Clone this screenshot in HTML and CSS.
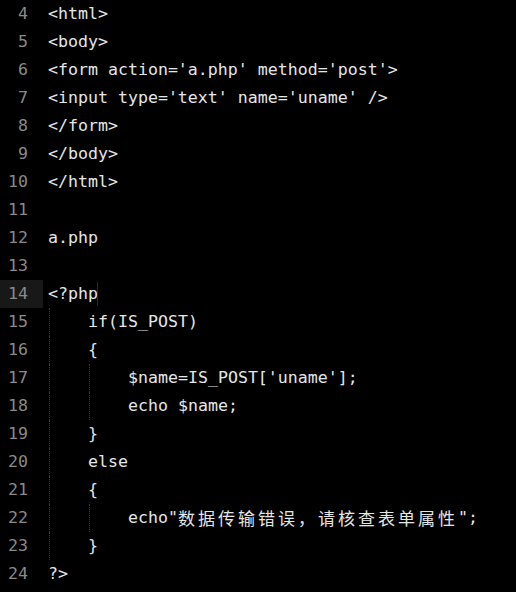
FILE: index.html
```html
<!DOCTYPE html>
<html>
<head>
<meta charset="utf-8">
<link rel="stylesheet" href="styles.css">
</head>
<body>
<div class="editor">
  <div class="line"><span class="num">4</span><span class="code">&lt;html&gt;</span></div>
  <div class="line"><span class="num">5</span><span class="code">&lt;body&gt;</span></div>
  <div class="line"><span class="num">6</span><span class="code">&lt;form action='a.php' method='post'&gt;</span></div>
  <div class="line"><span class="num">7</span><span class="code">&lt;input type='text' name='uname' /&gt;</span></div>
  <div class="line"><span class="num">8</span><span class="code">&lt;/form&gt;</span></div>
  <div class="line"><span class="num">9</span><span class="code">&lt;/body&gt;</span></div>
  <div class="line"><span class="num">10</span><span class="code">&lt;/html&gt;</span></div>
  <div class="line"><span class="num">11</span><span class="code"></span></div>
  <div class="line"><span class="num">12</span><span class="code">a.php</span></div>
  <div class="line"><span class="num">13</span><span class="code"></span></div>
  <div class="line current"><span class="num">14</span><span class="code">&lt;?php<span class="caret"></span></span></div>
  <div class="line"><span class="num">15</span><span class="code"><span class="ind"></span>if(IS_POST)</span></div>
  <div class="line"><span class="num">16</span><span class="code"><span class="ind"></span>{</span></div>
  <div class="line"><span class="num">17</span><span class="code"><span class="ind"></span><span class="ind"></span>$name=IS_POST['uname'];</span></div>
  <div class="line"><span class="num">18</span><span class="code"><span class="ind"></span><span class="ind"></span>echo $name;</span></div>
  <div class="line"><span class="num">19</span><span class="code"><span class="ind"></span>}</span></div>
  <div class="line"><span class="num">20</span><span class="code"><span class="ind"></span>else</span></div>
  <div class="line"><span class="num">21</span><span class="code"><span class="ind"></span>{</span></div>
  <div class="line"><span class="num">22</span><span class="code"><span class="ind"></span><span class="ind"></span>echo"<span class="cjk">数据传输错误，请核查表单属性</span>";</span></div>
  <div class="line"><span class="num">23</span><span class="code"><span class="ind"></span>}</span></div>
  <div class="line"><span class="num">24</span><span class="code">?&gt;</span></div>
</div>
</body>
</html>
```

FILE: styles.css
```css
html, body {
  margin: 0;
  padding: 0;
  background: #000;
}
.editor {
  width: 516px;
  height: 592px;
  background: #000;
  font-family: "DejaVu Sans Mono", "Liberation Mono", monospace;
  font-size: 16.6px;
  color: #e6e6e6;
  overflow: hidden;
}
.line {
  display: flex;
  height: 28px;
  align-items: center;
  white-space: pre;
}
.num {
  width: 28px;
  flex: none;
  text-align: right;
  color: #8a8a8a;
  padding-right: 15px;
  height: 28px;
  line-height: 28px;
}
.current .num {
  background: #181818;
}
.code {
  padding-left: 5px;
  height: 28px;
  line-height: 28px;
  display: flex;
  align-items: center;
}
.ind {
  display: inline-block;
  width: 40px;
  height: 28px;
  flex: none;
  box-sizing: border-box;
  border-left: 1px dotted #3a3a3a;
  margin-left: 1px;
  margin-right: -1px;
}
.caret {
  display: inline-block;
  width: 1px;
  height: 24px;
  background: #2a2a2a;
  margin-left: -1px;
}
.cjk {
  font-family: "Noto Sans CJK SC", sans-serif;
  font-size: 17px;
  letter-spacing: 3px;
}
```
